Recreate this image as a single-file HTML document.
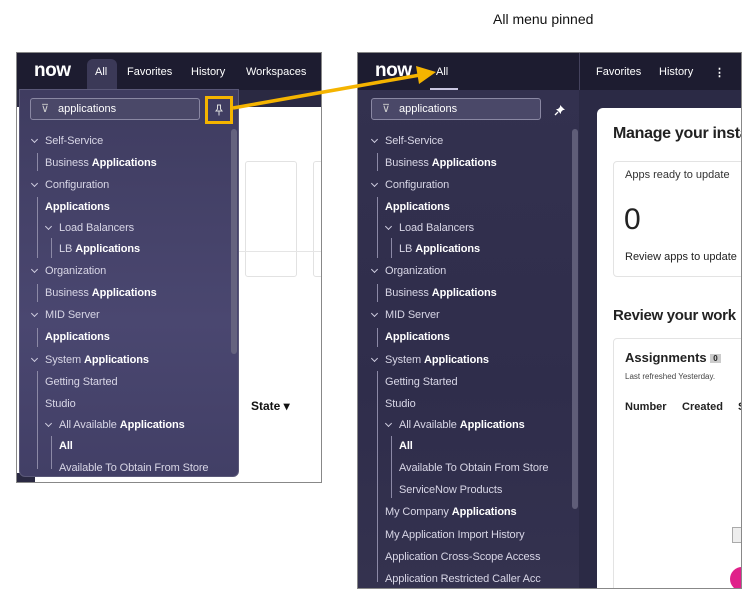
<!DOCTYPE html>
<html><head><style>
*{margin:0;padding:0;box-sizing:border-box}
body{width:753px;height:602px;background:#fff;font-family:"Liberation Sans",sans-serif;position:relative;overflow:hidden}
.a{position:absolute}
.frame{position:absolute;border:1px solid #888;overflow:hidden;background:#fff}
.hdr{position:absolute;left:0;top:0;right:0;height:37px;background:#1d1c30}
.logo{position:absolute;font-weight:bold;font-size:19px;color:#fff;letter-spacing:-0.5px}
.tab{position:absolute;top:13px;color:#fff;font-size:11px}
.it{position:absolute;font-size:11px;letter-spacing:-0.1px;color:#d8d6e6;white-space:nowrap}
.it b{color:#fff}
.chev{position:absolute;width:5px;height:5px;border-right:1px solid #cfcde0;border-bottom:1px solid #cfcde0;transform:rotate(45deg)}
.vl{position:absolute;width:1px;background:#8c89a6}
.search{position:absolute;border:1px solid #8a88a3;border-radius:3px;background:#4a4868;color:#fff;font-size:11px}
.nw{white-space:nowrap}
</style></head><body>
<div class="a" style="left:493px;top:11px;font-size:14px;color:#111">All menu pinned</div>

<div class="frame" style="left:16px;top:52px;width:306px;height:431px">
 <div class="hdr"></div>
 <div class="a" style="left:0;top:37px;right:0;height:17px;background:#2a2942"></div>
 <div class="logo" style="left:17px;top:7px">now</div>
 <div class="a" style="left:70px;top:6px;width:30px;height:31px;background:#3b3957;border-radius:6px 6px 0 0"></div>
 <div class="tab" style="left:78px">All</div>
 <div class="tab" style="left:110px">Favorites</div>
 <div class="tab" style="left:174px">History</div>
 <div class="tab" style="left:229px">Workspaces</div>
 <div class="a" style="left:228px;top:108px;width:52px;height:116px;border:1px solid #e2e2e2;border-radius:3px"></div>
 <div class="a" style="left:296px;top:108px;width:20px;height:116px;border:1px solid #e2e2e2;border-radius:3px"></div>
 <div class="a" style="left:40px;top:198px;right:0;height:1px;background:#e5e5e5"></div>
 <div class="a" style="left:234px;top:346px;font-size:12px;font-weight:bold;color:#111">State ▾</div>
 <div class="a" style="left:0;top:420px;width:18px;height:11px;background:#2a2942"></div>
 <div class="a" style="left:2px;top:36px;width:220px;height:388px;background:linear-gradient(180deg,#3f3c60,#4a4770 60%,#423f66);border-radius:0 0 6px 6px;border:1px solid #5a5878"></div>
 <div class="search" style="left:13px;top:45px;width:170px;height:22px"><span style="position:absolute;left:10px;top:3px;color:#ccc">⊽</span><span style="position:absolute;left:27px;top:4px">applications</span></div>
 <svg class="a" style="left:197px;top:51px" width="10" height="12" viewBox="0 0 10 12"><path d="M3 1h4M3.5 1v4L2 7h6L6.5 5V1M5 7v4.5" stroke="#ddd" fill="none" stroke-width="1"/></svg>
 <div class="a" style="left:214px;top:76px;width:6px;height:225px;background:#65637f;border-radius:3px"></div>
</div>

<div class="frame" style="left:357px;top:52px;width:385px;height:537px;background:#2b2a45">
 <div class="hdr"></div>
 <div class="a" style="left:221px;top:0;width:1px;height:37px;background:#44425d"></div>
 <div class="logo" style="left:17px;top:7px">now</div>
 <div class="tab" style="left:78px">All</div>
 <div class="a" style="left:72px;top:35px;width:28px;height:2px;background:#c9c6e0"></div>
 <div class="tab" style="left:238px">Favorites</div>
 <div class="tab" style="left:301px">History</div>
 <div class="tab" style="left:356px;font-weight:bold">⋮</div>
 <div class="a" style="left:0;top:37px;width:221px;bottom:0;background:linear-gradient(180deg,#33314f,#2f2d4b 60%,#34324f)"></div>
 <div class="search" style="left:13px;top:45px;width:170px;height:22px"><span style="position:absolute;left:10px;top:3px;color:#ccc">⊽</span><span style="position:absolute;left:27px;top:4px">applications</span></div>
 <svg class="a" style="left:196px;top:51px" width="12" height="12" viewBox="0 0 12 12"><path d="M6 1l5 5-2 0-2 2 0 2-5-5 2 0 2-2z" fill="#fff"/><path d="M4 8L1 11" stroke="#fff" stroke-width="1.3"/></svg>
 <div class="a" style="left:214px;top:76px;width:6px;height:380px;background:#5f5d78;border-radius:3px"></div>
 <div class="a" style="left:239px;top:55px;width:150px;height:490px;background:#fff;border-radius:6px 0 0 0"></div>
 <div class="a nw" style="left:255px;top:72px;font-size:16px;font-weight:bold;color:#222;letter-spacing:-0.3px">Manage your insta</div>
 <div class="a" style="left:255px;top:108px;width:140px;height:116px;border:1px solid #e3e3e3;border-radius:4px"></div>
 <div class="a nw" style="left:267px;top:116px;font-size:11px;color:#333">Apps ready to update</div>
 <div class="a" style="left:266px;top:150px;font-size:30px;color:#222">0</div>
 <div class="a nw" style="left:267px;top:198px;font-size:11px;color:#222">Review apps to update</div>
 <div class="a nw" style="left:255px;top:254px;font-size:15px;font-weight:bold;color:#222;letter-spacing:-0.3px">Review your work</div>
 <div class="a" style="left:255px;top:285px;width:140px;height:260px;border:1px solid #e3e3e3;border-radius:4px"></div>
 <div class="a nw" style="left:267px;top:297px;font-size:13px;font-weight:bold;color:#222">Assignments <span style="font-size:8px;background:#ccc;padding:0 3px;vertical-align:middle">0</span></div>
 <div class="a nw" style="left:267px;top:319px;font-size:8px;color:#444">Last refreshed Yesterday.</div>
 <div class="a nw" style="left:267px;top:348px;font-size:11px;font-weight:bold;color:#222">Number</div>
 <div class="a nw" style="left:324px;top:348px;font-size:11px;font-weight:bold;color:#222">Created</div>
 <div class="a nw" style="left:380px;top:348px;font-size:11px;font-weight:bold;color:#222">S</div>
 <div class="a" style="left:374px;top:474px;width:12px;height:16px;border:1px solid #aaa;background:#eee"></div>
 <div class="a" style="left:372px;top:514px;width:24px;height:24px;border-radius:50%;background:#e0218a"></div>
</div>

<div id="m"></div>
<script>
var items=[[0,1,'Self-Service'],[1,0,'Business <b>Applications</b>'],[0,1,'Configuration'],[1,0,'<b>Applications</b>'],[1,1,'Load Balancers'],[2,0,'LB <b>Applications</b>'],[0,1,'Organization'],[1,0,'Business <b>Applications</b>'],[0,1,'MID Server'],[1,0,'<b>Applications</b>'],[0,1,'System <b>Applications</b>'],[1,0,'Getting Started'],[1,0,'Studio'],[1,1,'All Available <b>Applications</b>'],[2,0,'<b>All</b>'],[2,0,'Available To Obtain From Store'],[2,0,'ServiceNow Products'],[1,0,'My Company <b>Applications</b>'],[1,0,'My Application Import History'],[1,0,'Application Cross-Scope Access'],[1,0,'Application Restricted Caller Acc']];
var ys=[140,162,184,206,227,248,270,292,314,336,359,381,403,424,445,467,489,511,534,556,578];
var h='';
[[18,475],[358,588]].forEach(function(f){
 var ox=f[0];
 items.forEach(function(it,i){
  var y=ys[i]+2; if(y>f[1]-6)return;
  var x;
  if(it[1]){var cx=ox+14+(it[0]?14:0);h+='<div class="chev" style="left:'+cx+'px;top:'+(y-5)+'px"></div>';x=ox+27+(it[0]?14:0);}
  else{x=ox+27+(it[0]==2?14:0);}
  h+='<div class="it" style="left:'+x+'px;top:'+(y-7)+'px">'+it[2]+'</div>';
 });
 var L=[[153,171],[197,258],[284,302],[328,347],[371,f[1]-6]];
 L.forEach(function(l){h+='<div class="vl" style="left:'+(ox+19)+'px;top:'+l[0]+'px;height:'+(Math.min(l[1],f[1]-6)-l[0])+'px"></div>';});
 h+='<div class="vl" style="left:'+(ox+33)+'px;top:238px;height:20px"></div>';
 h+='<div class="vl" style="left:'+(ox+33)+'px;top:436px;height:'+(ox>300?62:(f[1]-6-436))+'px"></div>';
});
document.getElementById('m').innerHTML=h;
</script>

<div class="a" style="left:205px;top:96px;width:28px;height:28px;border:3px solid #f5b400"></div>
<svg class="a" style="left:0;top:0" width="753" height="602">
 <line x1="233" y1="108" x2="420" y2="75" stroke="#f5b400" stroke-width="3.5"/>
 <polygon points="436,72 416,66 419,84" fill="#f5b400"/>
</svg>
</body></html>
